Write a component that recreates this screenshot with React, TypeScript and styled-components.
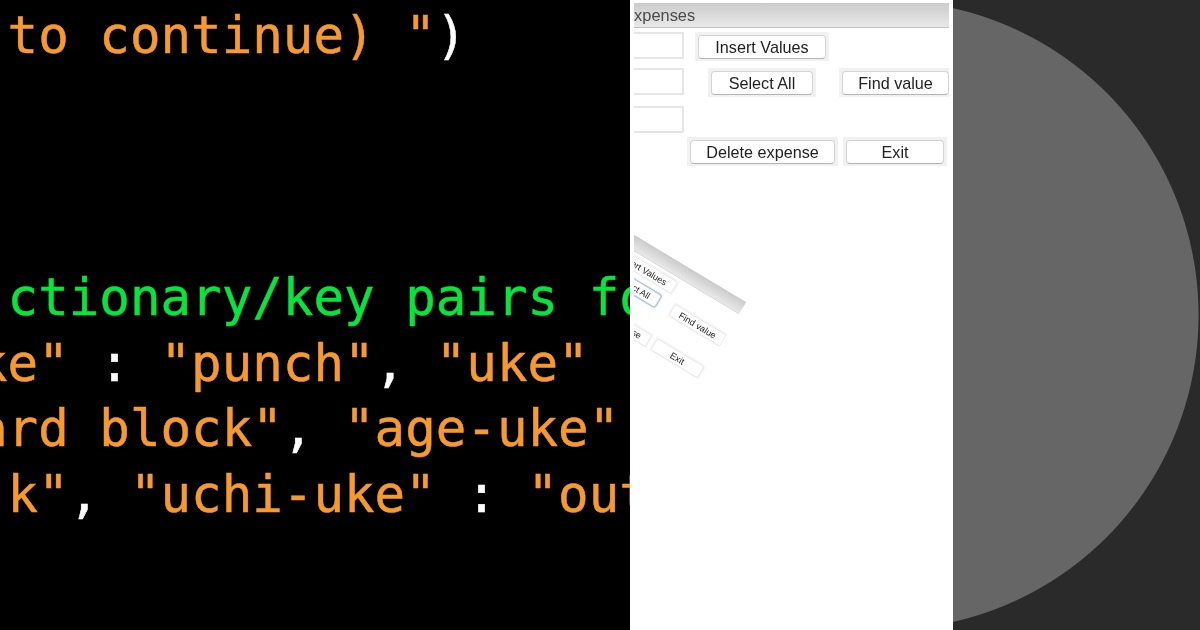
import React from 'react'
import styled, { createGlobalStyle } from 'styled-components'

const GlobalStyle = createGlobalStyle`
  html, body {
    margin: 0;
    padding: 0;
    background: #000;
  }
`

const Page = styled.div`
  display: flex;
  width: 1200px;
  height: 630px;
  overflow: hidden;
`

const CodePane = styled.pre`
  flex: 0 0 630px;
  box-sizing: border-box;
  margin: 0;
  padding: 3px 0 0 0;
  overflow: hidden;
  background: #000;
  color: #fff;
  font-family: 'DejaVu Sans Mono', 'Liberation Mono', monospace;
  font-size: 50.8px;
  line-height: 65.5px;
  text-indent: -23px;
  -webkit-text-stroke: 0.5px currentColor;
  filter: blur(0.7px);
`

const CodeLine = styled.div`
  height: 65.5px;
  white-space: pre;
`

const Str = styled.span`
  color: #f79a2e;
`

const Comment = styled.span`
  color: #04e63c;
`

const Shot = styled.div`
  flex: 0 0 323px;
  box-sizing: border-box;
  padding-left: 4px;
  background: #fff;
`

const Canvas = styled.div`
  position: relative;
  height: 630px;
  overflow: hidden;
  filter: blur(0.3px);
`

const Window = styled.div`
  box-sizing: border-box;
  width: 315px;
  padding-top: 3px;
  overflow: hidden;
  font-family: 'Liberation Sans', Arial, sans-serif;
`

const TitleBar = styled.div`
  box-sizing: border-box;
  height: 25px;
  background: linear-gradient(#cbcbcb, #e9e9e9);
  border-bottom: 1px solid #c4c4c4;
  color: #4a4a4a;
  font-size: 16.4px;
  line-height: 25px;
  white-space: nowrap;
  text-indent: -9px;
`

const Row = styled.div<{ $top: number; $left?: number }>`
  display: flex;
  align-items: flex-start;
  margin-top: ${p => p.$top}px;
  padding-left: ${p => p.$left ?? 0}px;
`

const Field = styled.div`
  box-sizing: border-box;
  flex: 0 0 60px;
  width: 60px;
  height: 27px;
  margin-left: -10px;
  background: #fff;
  border: 2px solid #e6e6e6;
  border-radius: 1px;
`

const Frame = styled.div<{ $gap: number; $width: number }>`
  box-sizing: border-box;
  flex: 0 0 ${p => p.$width}px;
  height: 29px;
  margin-left: ${p => p.$gap}px;
  padding: 3px;
  background: #f1f1f1;
`

const Button = styled.button<{ $focused?: boolean }>`
  display: block;
  box-sizing: border-box;
  width: 100%;
  height: 24px;
  padding: 0;
  background: #fff;
  border: 1px solid ${p => (p.$focused ? '#7fb2e8' : '#d4d4d4')};
  border-bottom-color: ${p => (p.$focused ? '#6aa5e6' : '#b4b4b4')};
  border-radius: 4px;
  box-shadow: ${p => (p.$focused ? '0 0 0 2px #9cc6f0' : 'none')};
  color: #222;
  font-family: inherit;
  font-size: 16.2px;
  line-height: 22px;
  white-space: nowrap;
`

const Tilted = styled.div`
  position: absolute;
  left: -38px;
  top: 210px;
  transform: rotate(31deg) scale(0.56);
  transform-origin: 0 0;

  ${Frame} {
    background: #f7f7f7;
  }

  ${Button} {
    border-color: #dcdcdc;
  }
`

const ExpenseWindow = ({ focused }: { focused?: boolean }) => (
  <Window>
    <TitleBar>expenses</TitleBar>
    <Row $top={4}>
      <Field />
      <Frame $gap={11} $width={134}>
        <Button>Insert Values</Button>
      </Frame>
    </Row>
    <Row $top={7}>
      <Field />
      <Frame $gap={24} $width={108}>
        <Button $focused={focused}>Select All</Button>
      </Frame>
      <Frame $gap={23} $width={113}>
        <Button>Find value</Button>
      </Frame>
    </Row>
    <Row $top={9}>
      <Field />
    </Row>
    <Row $top={4} $left={53}>
      <Frame $gap={0} $width={151}>
        <Button>Delete expense</Button>
      </Frame>
      <Frame $gap={5} $width={104}>
        <Button>Exit</Button>
      </Frame>
    </Row>
  </Window>
)

const Backdrop = styled.div`
  flex: 1;
  background: radial-gradient(circle 315px at -69px 315px, #666 99.7%, #2a2a2a 100%);
`

const App: React.FunctionComponent = () => (
  <Page>
    <GlobalStyle />
    <CodePane>
      <CodeLine>
        <Str> to continue) "</Str>)
      </CodeLine>
      <CodeLine> </CodeLine>
      <CodeLine> </CodeLine>
      <CodeLine> </CodeLine>
      <CodeLine>
        <Comment> ctionary/key pairs fo</Comment>
      </CodeLine>
      <CodeLine>
        <Str>ke"</Str> : <Str>"punch"</Str>, <Str>"uke"</Str> :
      </CodeLine>
      <CodeLine>
        <Str>ard block"</Str>, <Str>"age-uke"</Str>
      </CodeLine>
      <CodeLine>
        <Str> k"</Str>, <Str>"uchi-uke"</Str> : <Str>"out</Str>
      </CodeLine>
    </CodePane>
    <Shot>
      <Canvas>
        <ExpenseWindow />
        <Tilted>
          <ExpenseWindow focused />
        </Tilted>
      </Canvas>
    </Shot>
    <Backdrop />
  </Page>
)

export default App
